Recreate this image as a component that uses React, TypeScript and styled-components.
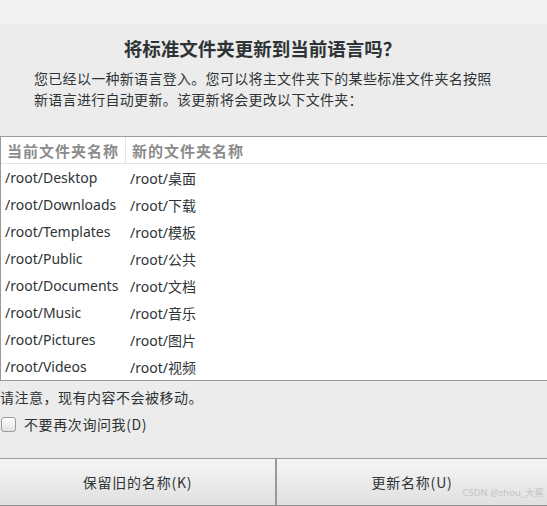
import React from 'react';
import styled, { createGlobalStyle } from 'styled-components';

const rows: Array<[string, string]> = [
    ['/root/Desktop', '/root/桌面'],
    ['/root/Downloads', '/root/下载'],
    ['/root/Templates', '/root/模板'],
    ['/root/Public', '/root/公共'],
    ['/root/Documents', '/root/文档'],
    ['/root/Music', '/root/音乐'],
    ['/root/Pictures', '/root/图片'],
    ['/root/Videos', '/root/视频'],
];

const cjk = `'Noto Sans CJK SC', 'Noto Sans', sans-serif`;

const GlobalStyle = createGlobalStyle`
    html, body {
        margin: 0;
        padding: 0;
        background: #ececec;
    }
    body {
        font-family: 'Noto Sans', 'Noto Sans CJK SC', sans-serif;
        color: #2e3436;
    }
`;

export default function App() {
    return (
        <>
            <GlobalStyle />
            <Dialog>
                <TopStrip />
                <Title>将标准文件夹更新到当前语言吗？</Title>
                <Description>
                    您已经以一种新语言登入。您可以将主文件夹下的某些标准文件夹名按照
                    <br />
                    新语言进行自动更新。该更新将会更改以下文件夹：
                </Description>
                <Table>
                    <HeaderCell>当前文件夹名称</HeaderCell>
                    <HeaderCell $last>新的文件夹名称</HeaderCell>
                    {rows.map(([from, to]) => (
                        <React.Fragment key={from}>
                            <Cell>{from}</Cell>
                            <Cell>{to}</Cell>
                        </React.Fragment>
                    ))}
                </Table>
                <Note>请注意，现有内容不会被移动。</Note>
                <CheckRow>
                    <CheckBox />
                    <span>不要再次询问我(D)</span>
                </CheckRow>
                <ButtonBar>
                    <Button>保留旧的名称(K)</Button>
                    <Button>更新名称(U)</Button>
                    <Watermark>CSDN @zhou_大蕉</Watermark>
                </ButtonBar>
            </Dialog>
        </>
    );
}

const Dialog = styled.div`
    width: 547px;
    height: 506px;
    display: flex;
    flex-direction: column;
    background: #ececec;
    overflow: hidden;
`;

const TopStrip = styled.div`
    height: 24px;
    flex-shrink: 0;
    background: #f2f2f2;
`;

const Title = styled.div`
    margin-top: 12px;
    padding-right: 22px;
    font-family: ${cjk};
    font-size: 18.5px;
    line-height: 24px;
    font-weight: bold;
    text-align: center;
    text-spacing-trim: space-all;
`;

const Description = styled.div`
    margin-top: 8px;
    padding-left: 34px;
    font-family: ${cjk};
    font-size: 14px;
    letter-spacing: 0.3px;
    line-height: 21px;
`;

const Table = styled.div`
    margin-top: 26px;
    display: grid;
    grid-template-columns: 125px 1fr;
    grid-auto-rows: 27px;
    grid-template-rows: 27px;
    background: #ffffff;
    border-top: 1px solid #9a9a9a;
    border-bottom: 1px solid #9a9a9a;
    border-left: 1px solid #9a9a9a;
    font-size: 14px;
`;

const HeaderCell = styled.div<{ $last?: boolean }>`
    display: flex;
    align-items: center;
    padding-left: 6px;
    font-size: 15px;
    letter-spacing: 1px;
    font-weight: bold;
    color: #8a8c8c;
    border-bottom: 1px solid #e4e4e4;
    border-right: ${(p) => (p.$last ? 'none' : '1px solid #e4e4e4')};
`;

const Cell = styled.div`
    display: flex;
    align-items: center;
    padding-left: 4px;
    white-space: nowrap;
`;

const Note = styled.div`
    margin-top: 6px;
    font-family: ${cjk};
    font-size: 14px;
    letter-spacing: 0.5px;
    line-height: 20px;
`;

const CheckRow = styled.label`
    margin-top: 7px;
    display: flex;
    align-items: center;
    gap: 8px;
    padding-left: 1px;
    font-family: ${cjk};
    font-size: 14px;
    letter-spacing: 0.6px;
    line-height: 20px;
`;

const CheckBox = styled.span`
    width: 13px;
    height: 13px;
    border: 1px solid #9b9b9b;
    border-radius: 3px;
    background: linear-gradient(#ffffff, #e2e2e2);
`;

const ButtonBar = styled.div`
    position: relative;
    margin-top: auto;
    height: 46px;
    display: grid;
    grid-template-columns: 275px 1fr;
    border-top: 1px solid #9a9a9a;
    border-bottom: 1px solid #8e8e8e;
`;

const Button = styled.div`
    display: flex;
    align-items: center;
    justify-content: center;
    font-family: ${cjk};
    font-size: 14px;
    letter-spacing: 0.8px;
    background: linear-gradient(#f5f5f5 0%, #ededed 40%, #e0e0e0 100%);
    & + & {
        border-left: 2px solid #9a9a9a;
    }
`;

const Watermark = styled.span`
    position: absolute;
    right: 3px;
    bottom: 6px;
    font-size: 9.5px;
    color: #c4c4c4;
`;
